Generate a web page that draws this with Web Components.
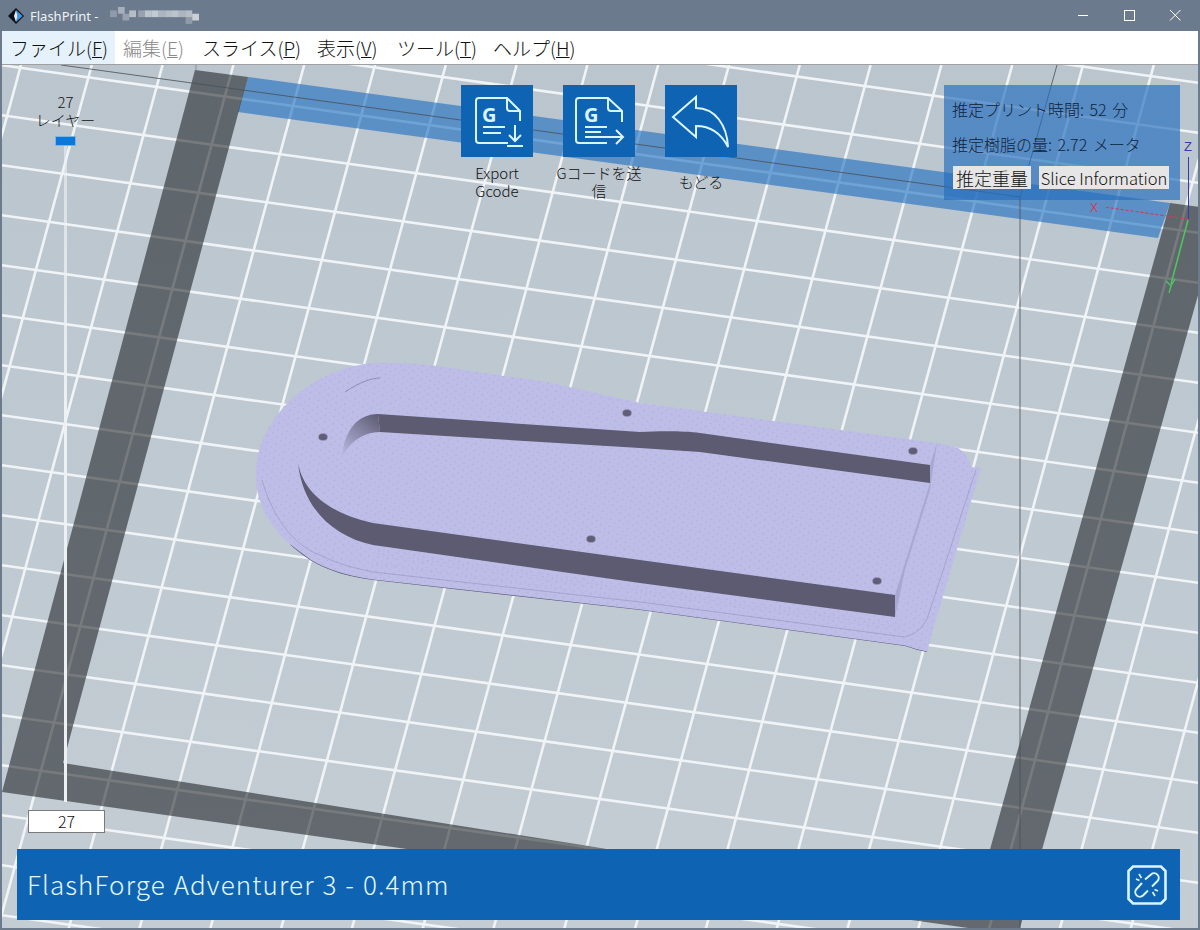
<!DOCTYPE html>
<html lang="ja">
<head>
<meta charset="utf-8">
<title>FlashPrint</title>
<style>
html,body{margin:0;padding:0;height:100%;overflow:hidden}
body{font-family:"Noto Sans CJK JP","Noto Sans",sans-serif}
</style>
</head>
<body>
<fp-window>
    <fp-titlebar slot="title"></fp-titlebar>
    <fp-menubar slot="menu">
        <fp-menu style="width:113px" active>ファイル(<u>F</u>)</fp-menu>
        <fp-menu style="width:79px" disabled>編集(<u>E</u>)</fp-menu>
        <fp-menu style="width:115px">スライス(<u>P</u>)</fp-menu>
        <fp-menu style="width:80px">表示(<u>V</u>)</fp-menu>
        <fp-menu style="width:96px">ツール(<u>T</u>)</fp-menu>
        <fp-menu style="width:98px">ヘルプ(<u>H</u>)</fp-menu>
    </fp-menubar>
    <fp-viewport slot="view">
        <fp-layer-slider slot="left" value="27" label="レイヤー"></fp-layer-slider>
        <fp-toolbar slot="center">
            <fp-tool label="Export Gcode"><svg viewBox="0 0 72 72" fill="none" stroke="currentColor" stroke-width="2"><path d="M47 58H18a3 3 0 0 1-3-3V16a3 3 0 0 1 3-3H46L59 26V36"/><path d="M46 13V23a3 3 0 0 0 3 3H59"/><text x="21" y="37" font-family="Noto Sans,sans-serif" font-weight="700" font-size="20" fill="currentColor" stroke="none">G</text><path d="M22 42H44M22 48H40M54 40V56M48 50l6 6 6-6M46 61H62"/></svg></fp-tool>
            <fp-tool label="Gコードを送信"><svg viewBox="0 0 72 72" fill="none" stroke="currentColor" stroke-width="2"><path d="M44 58H16a3 3 0 0 1-3-3V16a3 3 0 0 1 3-3H45L59 26V37"/><path d="M45 13V23a3 3 0 0 0 3 3H59"/><text x="21" y="37" font-family="Noto Sans,sans-serif" font-weight="700" font-size="20" fill="currentColor" stroke="none">G</text><path d="M22 42H44M22 47H38M22 52H60M53 45l7 7-7 7"/></svg></fp-tool>
            <fp-tool label="もどる"><svg viewBox="0 0 72 72" fill="none" stroke="currentColor" stroke-width="2"><path d="M8 32 31 12V23C50 23 62 40 63 62 56 48 45 41 31 41V52Z"/></svg></fp-tool>
        </fp-toolbar>
        <fp-info slot="right" time="推定プリント時間: 52 分" amount="推定樹脂の量: 2.72 メータ">
            <fp-button>推定重量</fp-button>
            <fp-button small>Slice Information</fp-button>
        </fp-info>
        <fp-printer-bar slot="bottom">FlashForge Adventurer 3 - 0.4mm</fp-printer-bar>
    </fp-viewport>
</fp-window>

<script>
class Base extends HTMLElement{
    connectedCallback(){
        if(this.shadowRoot) return
        this.attachShadow({mode:'open'}).innerHTML = this.html
    }
}


class FpWindow extends Base{
    get html(){
        return `
        <slot name="title"></slot>
        <slot name="menu"></slot>
        <slot name="view"></slot>
        <style>
        :host{
            display:flex;
            flex-direction:column;
            width:1200px;
            height:930px;
            box-sizing:border-box;
            border:solid #6b7a8c;
            border-width:0 2px 2px 2px;
            background:#6b7a8c;
            overflow:hidden;
        }
        </style>
        `
    }
}


class FpTitlebar extends Base{
    get html(){
        const blocks = [[3,3,'.25'],[10,0,'.4'],[14,6,'.3'],[20,3,'.5'],[28,3,'.3'],[34,3,'.55'],[40,3,'.6'],[46,3,'.45'],[52,3,'.5'],[58,3,'.55'],[64,3,'.45'],[70,3,'.5'],[76,6,'.65'],[70,9,'.25']]
            .map(b => `<rect x="${b[0]}" y="${b[1]}" width="6" height="6" fill="#fff" opacity="${b[2]}"/>`).join('')
        return `
        <svg class="logo" viewBox="0 0 16 16" width="16" height="16"><path d="M8 0 16 8 8 16 0 8Z" fill="#0c1118"/><path d="M8 2 14.5 8 8 14 9.5 8Z" fill="#3c9be6"/><path d="M8 2 9.5 8 8 14 6 8Z" fill="#e8eef5"/></svg>
        <span class="name">FlashPrint - </span>
        <svg class="blur" viewBox="0 0 84 16" width="96" height="18">${blocks}</svg>
        <span class="grow"></span>
        <svg class="btn" viewBox="0 0 46 31" width="46" height="31"><path d="M18 15.500H28" stroke="#fff" fill="none"/></svg>
        <svg class="btn" viewBox="0 0 46 31" width="46" height="31"><rect x="18.500" y="10.500" width="10" height="10" stroke="#fff" fill="none"/></svg>
        <svg class="btn" viewBox="0 0 46 31" width="46" height="31"><path d="M18 10 28.500 20.500M28.500 10 18 20.500" stroke="#fff" fill="none"/></svg>
        <style>
        :host{
            display:flex;
            align-items:center;
            height:31px;
            background:#6b7a8c;
            color:#eef2f6;
            font:13px "Noto Sans","Noto Sans CJK JP",sans-serif;
            padding-left:6px;
            flex:none;
        }
        .logo{margin-right:6px}
        .name{white-space:pre}
        .blur{margin-left:4px}
        .grow{flex:1}
        .btn{display:block}
        </style>
        `
    }
}


class FpMenubar extends Base{
    get html(){
        return `
        <slot></slot>
        <style>
        :host{
            display:flex;
            height:34px;
            box-sizing:border-box;
            background:#fff;
            border-bottom:solid 1px #a0a0a0;
            flex:none;
        }
        </style>
        `
    }
}


class FpMenu extends Base{
    get html(){
        return `
        <span><slot></slot></span>
        <style>
        :host{
            display:flex;
            align-items:center;
            box-sizing:border-box;
            padding:0 0 0 8px;
            font-size:19px;
            font-weight:300;
            color:#111;
            white-space:nowrap;
        }
        :host([active]){background:#e5f1fb}
        :host([disabled]){color:#8a8a8a}
        </style>
        `
    }
}


class FpViewport extends Base{
    get html(){
        return `
        <fp-scene></fp-scene>
        <div id="hud">
            <slot name="left"></slot>
            <slot name="center"></slot>
            <slot name="right"></slot>
            <slot name="bottom"></slot>
        </div>
        <style>
        :host{
            display:block;
            position:relative;
            flex:1;
            min-height:0;
        }
        fp-scene{position:absolute;inset:0}
        #hud{
            position:relative;
            box-sizing:border-box;
            height:100%;
            display:grid;
            grid-template:"left center right" 1fr "bottom bottom bottom" auto / 103px 1fr 236px;
            padding:20px 18px 8px 15px;
            row-gap:16px;
        }
        ::slotted([slot=left]){grid-area:left}
        ::slotted([slot=center]){grid-area:center}
        ::slotted([slot=right]){grid-area:right}
        ::slotted([slot=bottom]){grid-area:bottom}
        </style>
        `
    }
}


class FpScene extends Base{
    get html(){
        // bed grid: two nearly parallel families of lines, read off the reference
        let grid = ''
        for(let k = -6; k < 24; k++){
            const top = 21 + 70.8 * k
            grid += `<line x1="${top}" y1="65" x2="${top - 235.9}" y2="930"/>`
        }
        for(let k = -6; k < 20; k++){
            const y = 115 + 50 * k
            grid += `<line x1="0" y1="${y}" x2="1200" y2="${y + 168}"/>`
        }
        const holes = [[323,437],[627,413],[913,451],[591,539],[877,581]]
            .map(h => `<ellipse cx="${h[0]}" cy="${h[1]}" rx="4.500" ry="3.500" fill="#5f5e74" stroke="#9a99bb" stroke-width=".7"/>`).join('')
        const outline = 'M373 363C320 368 270 405 258 455C250 495 265 530 310 560C330 572 350 577 373 580L640 610L905 646Q916 650 927 652L933 630L981 468L971 467C969 458 964 452 958 448L937 443L640 403L547 382C540 381 470 371 470 371C430 364 400 362 373 363Z'
        return `
        <svg viewBox="2 65 1196 863" width="1196" height="863">
            <defs>
                <linearGradient id="bg" x1="0" y1="0" x2="0" y2="1"><stop offset="0" stop-color="#bac5ce"/><stop offset="1" stop-color="#c4cdd4"/></linearGradient>
                <linearGradient id="curve" x1="378" y1="414" x2="342" y2="458" gradientUnits="userSpaceOnUse"><stop offset="0" stop-color="#5c5b72"/><stop offset="1" stop-color="#bdbce6"/></linearGradient>
                <pattern id="dots" width="9" height="7" patternUnits="userSpaceOnUse" patternTransform="rotate(8)"><circle cx="2" cy="2" r=".6" fill="#8382aa" opacity=".6"/><circle cx="6.500" cy="5.500" r=".5" fill="#8382aa" opacity=".4"/></pattern>
                <pattern id="ticks" width="5" height="14" patternUnits="userSpaceOnUse" patternTransform="rotate(8)"><path d="M2 0V9" stroke="#9493ba" stroke-width=".5" stroke-dasharray="1 1.500" opacity=".7"/></pattern>
                <clipPath id="part"><path d="${outline}"/></clipPath>
            </defs>
            <rect x="0" y="65" width="1200" height="865" fill="url(#bg)"/>
            <g stroke="#f1f4f6" stroke-width="2.600">${grid}</g>
            <path d="M248 77 1170 203 1158 238 238 112Z" fill="#1a6cc0" fill-opacity=".6"/>
            <path d="M195 70 248 77 63 763 974 907 1170 203 1222 210 1018 935 2 792Z" fill="#14171b" fill-opacity=".55"/>
            <path d="M61 65 1020 197" fill="none" stroke="#4a4f55" stroke-opacity=".8"/>
            <path d="M1057 65 1020 197V930" fill="none" stroke="#4a4f55" stroke-opacity=".8"/>
            <path d="M196 65V70" fill="none" stroke="#8a8f95"/>

            <path d="${outline}" fill="#bebde8"/>
            <g clip-path="url(#part)">
                <path d="M290 545 310 560C330 572 350 577 373 580L640 610L905 646Q916 650 927 652" fill="none" stroke="#65647c" stroke-width="1.200"/>
                <path d="M262 480C272 515 292 545 320 555C340 565 355 568 373 572L640 602L905 637Q925 632 930 610L976 470" fill="none" stroke="#a5a4cc" stroke-width="1"/>
                <path d="M345 392C360 382 372 378 380 378" fill="none" stroke="#8e8db0" stroke-width="1"/>
                <rect x="240" y="355" width="750" height="300" fill="url(#dots)"/>
                <path d="M380 548 640 588 900 622 905 636 640 600 370 565Z" fill="url(#ticks)"/>
            </g>
            <path d="M937 443 930 465V483L895 595V617L905 570 930 490Z" fill="#a9a8d2"/>
            <path d="M378 414C358 414 344 430 342 458C348 444 362 432 380 432Z" fill="url(#curve)"/>
            <path d="M378 414 640 432C660 431 685 431 700 433L930 465V483L700 452 640 448 380 432Z" fill="#5c5b72"/>
            <path d="M298 463C303 490 325 512 373 523L640 560 895 595V617L640 583 373 545C335 537 303 510 298 463Z" fill="#5c5b72"/>
            ${holes}

            <path d="M1188 219 1104 207" stroke="#d03c5a" stroke-width="1.200" stroke-dasharray="3 2" fill="none"/>
            <text x="1090" y="212" font-size="12" fill="#d03c5a" font-family="Liberation Sans">X</text>
            <path d="M1188.500 157V219" stroke="#3a3ab0" fill="none"/>
            <text x="1184" y="151" font-size="13" fill="#3a3ab0" font-family="Liberation Sans">Z</text>
            <path d="M1188 220 1171 284" stroke="#4cc860" stroke-width="1.500" fill="none"/>
            <path d="M1166 281 1171 286 1175 279M1171 286 1169 293" stroke="#4cc860" stroke-width="1.300" fill="none"/>
        </svg>
        <style>
        :host{display:block;overflow:hidden}
        svg{display:block}
        </style>
        `
    }
}


class FpLayerSlider extends Base{
    get html(){
        const value = this.getAttribute('value')
        return `
        <div id="num">${value}
${this.getAttribute('label')}</div>
        <div id="thumb"></div>
        <div id="track"></div>
        <div id="input">${value}</div>
        <style>
        :host{
            display:flex;
            flex-direction:column;
            align-items:center;
            margin-top:8px;
            margin-left:11px;
            width:77px;
            justify-self:start;
            font-size:15px;
            font-weight:300;
            color:#111;
            line-height:18px;
        }
        #num{text-align:center;white-space:pre-line;margin-right:2px}
        #thumb{width:21px;height:10px;background:#0a78d8;margin:7px 2px 0 0;border:solid 1px #7fb3e0;box-sizing:border-box}
        #track{flex:1;width:3px;background:linear-gradient(rgba(238,241,243,.55),#eef1f3 40%);margin:0 2px 8px 0}
        #input{
            width:77px;
            height:23px;
            box-sizing:border-box;
            background:#fff;
            border:solid 1px #7a7a7a;
            text-align:center;
            line-height:21px;
            font-size:16px;
        }
        </style>
        `
    }
}


class FpToolbar extends Base{
    get html(){
        return `
        <slot></slot>
        <style>
        :host{
            display:flex;
            align-items:flex-start;
            padding-left:326px;
        }
        </style>
        `
    }
}


class FpTool extends Base{
    get html(){
        return `
        <div id="tile"><slot></slot></div>
        <div id="label">${this.getAttribute('label')}</div>
        <style>
        :host{
            display:flex;
            flex-direction:column;
            align-items:center;
            width:102px;
        }
        #tile{
            width:72px;
            height:72px;
            background:#0f63b3;
            color:#d9f5ff;
        }
        ::slotted(svg){display:block;width:72px;height:72px}
        #label{
            width:90px;
            min-height:36px;
            margin-top:7px;
            display:flex;
            align-items:center;
            justify-content:center;
            text-align:center;
            font-size:15px;
            font-weight:300;
            line-height:18px;
            color:#111;
        }
        </style>
        `
    }
}


class FpInfo extends Base{
    get html(){
        return `
        <div class="row">${this.getAttribute('time')}</div>
        <div class="row">${this.getAttribute('amount')}</div>
        <div id="buttons"><slot></slot></div>
        <style>
        :host{
            display:flex;
            flex-direction:column;
            align-self:start;
            height:115px;
            box-sizing:border-box;
            background:rgba(38,110,190,.68);
            padding:7px 8px 0 8px;
            font-size:16px;
            font-weight:300;
            word-spacing:2px;
            color:#10233a;
        }
        .row{height:35px;line-height:35px;white-space:nowrap}
        #buttons{display:flex;gap:8px;margin-top:4px;padding-left:1px}
        </style>
        `
    }
}


class FpButton extends Base{
    get html(){
        return `
        <slot></slot>
        <style>
        :host{
            display:flex;
            align-items:center;
            justify-content:center;
            width:78px;
            height:23px;
            box-sizing:border-box;
            background:#e6e6e6;
            color:#111;
            font-size:18px;
            font-weight:300;
            word-spacing:0;
            white-space:nowrap;
        }
        :host([small]){font-size:16.500px;width:130px}
        </style>
        `
    }
}


class FpPrinterBar extends Base{
    get html(){
        return `
        <span id="name"><slot></slot></span>
        <svg viewBox="0 0 40 40" width="40" height="40" fill="none" stroke="#d9f5ff">
            <path d="M6 1.500H34L38.500 6V34L34 38.500H6L1.500 34V6Z" stroke-width="2.600"/>
            <path d="M18 14.500 24 9.500A4.600 4.600 0 0 1 30.500 16L25 21.500M15 18 9.500 24A4.600 4.600 0 0 0 16 30.500L21 25.500" stroke-width="2"/>
            <path d="M12 9 14.500 13M9 14 12.500 15.500M28 31 25.500 27M31 26 27.500 24.500" stroke-width="1.700"/>
        </svg>
        <style>
        :host{
            display:flex;
            align-items:center;
            justify-content:space-between;
            height:71px;
            background:#0f63b3;
            padding:0 13px 0 10px;
            color:#e2f8ff;
        }
        #name{font-size:26px;font-weight:300;letter-spacing:1.100px;word-spacing:1px;white-space:nowrap;margin-bottom:2px}
        </style>
        `
    }
}


customElements.define('fp-window', FpWindow)
customElements.define('fp-titlebar', FpTitlebar)
customElements.define('fp-menubar', FpMenubar)
customElements.define('fp-menu', FpMenu)
customElements.define('fp-viewport', FpViewport)
customElements.define('fp-scene', FpScene)
customElements.define('fp-layer-slider', FpLayerSlider)
customElements.define('fp-toolbar', FpToolbar)
customElements.define('fp-tool', FpTool)
customElements.define('fp-info', FpInfo)
customElements.define('fp-button', FpButton)
customElements.define('fp-printer-bar', FpPrinterBar)
</script>
</body>
</html>
